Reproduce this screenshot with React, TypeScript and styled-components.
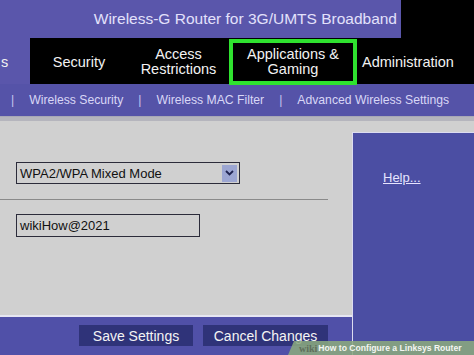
import { FC } from "react";
import styled, { createGlobalStyle } from "styled-components";

const GlobalStyle = createGlobalStyle`
  html, body {
    margin: 0;
    padding: 0;
    background: #d0d0d0;
  }
  body {
    font-family: "Liberation Sans", Arial, sans-serif;
  }
`;

const Page = styled.div`
  position: relative;
  width: 474px;
  height: 355px;
  overflow: hidden;
  background: #d0d0d0;
`;

const TitleRow = styled.div`
  display: flex;
  height: 38px;
  background: #000;
`;

const TitleBox = styled.div`
  width: 401px;
  background: #5a56ab;
  color: #e3e1fb;
  font-size: 15.5px;
  display: flex;
  align-items: center;
  justify-content: flex-end;
  padding-right: 4px;
  box-sizing: border-box;
`;

const NavRow = styled.div`
  display: flex;
  height: 46px;
  background: #000;
`;

const NavStub = styled.div`
  width: 30px;
  background: #5a56ab;
  color: #f2f2f2;
  font-size: 14.5px;
  display: flex;
  align-items: center;
  padding-left: 1px;
  padding-top: 2px;
  box-sizing: border-box;
`;

const Tab = styled.div<{ $w: number; $active?: boolean; $align?: string }>`
  width: ${(p) => p.$w}px;
  box-sizing: border-box;
  display: flex;
  align-items: center;
  justify-content: ${(p) => p.$align || "center"};
  text-align: center;
  color: #f2f2f2;
  font-size: 14.5px;
  line-height: 15px;
  padding-top: 2px;
  ${(p) =>
    p.$active &&
    `
    border: 4px solid #2fe22f;
    margin-top: 1px;
    height: 46px;
    padding-top: 0;
  `}
`;

const SubNav = styled.div`
  height: 32px;
  background: #5553a8;
  display: flex;
  align-items: center;
  color: #d9d7f6;
  font-size: 12.2px;
  padding-left: 11px;
  gap: 15px;
`;

const Pipe = styled.span`
  color: #c8c6ee;
`;

const Separator = styled.div`
  height: 5px;
  background: #b5b5bd;
  border-top: 1px solid #a8a8b6;
  box-sizing: border-box;
`;

const Main = styled.div`
  display: grid;
  grid-template-columns: 352px 1fr;
  height: 234px;
`;

const LeftCol = styled.div`
  display: flex;
  flex-direction: column;
`;

const FormArea = styled.div`
  flex: 1;
  background: #d0d0d0;
  padding-top: 41px;
  border-bottom: 2px solid #e6e6f2;
`;

const FieldRow = styled.div<{ $pad: number }>`
  padding: 0 0 0 16px;
  margin-bottom: ${(p) => p.$pad}px;
`;

const Select = styled.div`
  width: 224px;
  height: 22px;
  box-sizing: border-box;
  border: 1.5px solid #2b2b3a;
  display: flex;
  align-items: center;
  justify-content: space-between;
  padding: 0 2px 0 3px;
  font-size: 13px;
  color: #111;
`;

const Arrow = styled.div`
  width: 15px;
  height: 17px;
  background: #9ca6d2;
  display: flex;
  align-items: center;
  justify-content: center;
`;

const Divider = styled.div`
  width: 328px;
  height: 1px;
  background: #8a8a8a;
  margin-bottom: 14px;
`;

const TextInput = styled.div`
  width: 184px;
  height: 23px;
  box-sizing: border-box;
  border: 1.5px solid #2b2b3a;
  display: flex;
  align-items: center;
  padding-left: 3px;
  font-size: 13px;
  color: #111;
`;

const ButtonBar = styled.div`
  height: 38px;
  background: #5050a8;
  display: flex;
  align-items: flex-start;
  padding: 8px 0 0 79px;
  box-sizing: border-box;
  gap: 10px;
`;

const Button = styled.div<{ $w: number }>`
  width: ${(p) => p.$w}px;
  height: 21px;
  background: #2f3379;
  color: #f4f4f4;
  font-size: 14px;
  display: flex;
  align-items: center;
  justify-content: center;
`;

const RightCol = styled.div`
  padding-top: 11px;
  background: #d0d0d0;
  display: flex;
`;

const HelpPanel = styled.div`
  flex: 1;
  background: #4b4ea3;
  border-top: 1px solid #dcdcf0;
  border-left: 1px solid #dcdcf0;
  padding: 35px 0 0 30px;
`;

const HelpLink = styled.a`
  color: #e6e4ff;
  font-size: 13px;
  text-decoration: underline;
`;

const Watermark = styled.div`
  position: absolute;
  right: 0;
  bottom: 0;
  width: 186px;
  height: 14px;
  background: rgba(138, 168, 126, 0.88);
  clip-path: polygon(6px 0, 100% 0, 100% 100%, 0 100%);
  font-size: 8.6px;
  font-weight: bold;
  color: #f4f6f2;
  display: flex;
  align-items: center;
  padding-left: 11px;
  box-sizing: border-box;
  white-space: nowrap;
`;

const Wiki = styled.span`
  color: #5f6e5b;
  font-family: "Liberation Serif", serif;
  font-size: 10px;
  margin-right: 1px;
`;

const Chevron: FC = () => (
  <svg width="9" height="6" viewBox="0 0 9 6">
    <path d="M1 1 L4.5 4.5 L8 1" stroke="#1f2350" strokeWidth="1.8" fill="none" />
  </svg>
);

export default function App() {
  return (
    <Page>
      <GlobalStyle />
      <TitleRow>
        <TitleBox>Wireless-G Router for 3G/UMTS Broadband</TitleBox>
      </TitleRow>
      <NavRow>
        <NavStub>s</NavStub>
        <Tab $w={98}>Security</Tab>
        <Tab $w={101}>
          Access
          <br />
          Restrictions
        </Tab>
        <Tab $w={128} $active>
          Applications &amp;
          <br />
          Gaming
        </Tab>
        <Tab $w={117} $align="flex-start" style={{ paddingLeft: 5 }}>
          Administration
        </Tab>
      </NavRow>
      <SubNav>
        <Pipe>|</Pipe>
        <span>Wireless Security</span>
        <Pipe>|</Pipe>
        <span>Wireless MAC Filter</span>
        <Pipe>|</Pipe>
        <span>Advanced Wireless Settings</span>
      </SubNav>
      <Separator />
      <Main>
        <LeftCol>
          <FormArea>
            <FieldRow $pad={15}>
              <Select>
                WPA2/WPA Mixed Mode
                <Arrow>
                  <Chevron />
                </Arrow>
              </Select>
            </FieldRow>
            <Divider />
            <FieldRow $pad={0}>
              <TextInput>wikiHow@2021</TextInput>
            </FieldRow>
          </FormArea>
          <ButtonBar>
            <Button $w={114}>Save Settings</Button>
            <Button $w={125}>Cancel Changes</Button>
          </ButtonBar>
        </LeftCol>
        <RightCol>
          <HelpPanel>
            <HelpLink>Help...</HelpLink>
          </HelpPanel>
        </RightCol>
      </Main>
      <Watermark>
        <Wiki>wiki</Wiki>
        How to Configure a Linksys Router
      </Watermark>
    </Page>
  );
}
